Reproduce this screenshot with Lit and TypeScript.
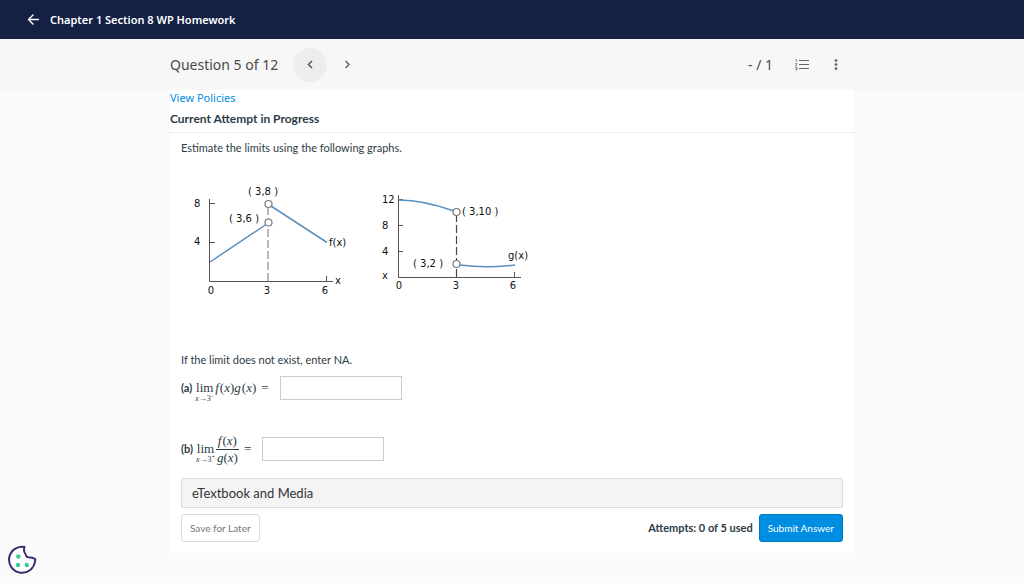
import { LitElement, html, css } from "lit";
import { customElement } from "lit/decorators.js";

@customElement("limit-graphs")
class LimitGraphs extends LitElement {
  static styles = css`
    :host { display: flex; }
    svg { display: block; width: 180px; height: 120px; font: 10px "DejaVu Sans", sans-serif; }
    .axis { stroke: #555; fill: none; }
    .dash { stroke: #888; stroke-width: 1.2; stroke-dasharray: 8 3; }
    .dash.dark { stroke: #444; }
    .curve { stroke: #5b8fbe; stroke-width: 1.5; fill: none; }
    .hole { stroke: #777; stroke-width: 1.2; fill: #fff; }
    text { fill: #111; }
    .mid { text-anchor: middle; }
  `;
  render() {
    return html`
      <svg viewBox="0 0 180 120" role="img" aria-label="Graph of f(x)">
        <path class="axis" d="M28.5 19V101.5H152M28.5 23.5H34M28.5 62.5H34M145.5 96V101" />
        <path class="dash" d="M87 101V24" />
        <path class="curve" d="M29 82L85 44.5M90 26L146 62.5" />
        <circle class="hole" cx="87.5" cy="24" r="3.5" />
        <circle class="hole" cx="87.5" cy="42.5" r="3.5" />
        <text x="13" y="27">8</text>
        <text x="13" y="65">4</text>
        <text class="mid" x="30" y="114">0</text>
        <text class="mid" x="86" y="114">3</text>
        <text class="mid" x="144" y="114">6</text>
        <text x="154" y="104">x</text>
        <text x="148" y="66">f(x)</text>
        <text x="67" y="15">( 3,8 )</text>
        <text x="48" y="42">( 3,6 )</text>
      </svg>
      <svg viewBox="0 0 180 120" role="img" aria-label="Graph of g(x)">
        <path class="axis" d="M37.5 15V97.5H160M37.5 19.5H42M37.5 45.5H42M37.5 71.5H42M153.5 92V97" />
        <path class="dash dark" d="M95.5 97V32" />
        <path class="curve" d="M38 20Q62 20 93 31M99 85Q125 88.5 154 85" />
        <circle class="hole" cx="95.5" cy="32" r="3.5" />
        <circle class="hole" cx="95.5" cy="84" r="3.5" />
        <text x="21" y="23">12</text>
        <text x="21" y="49">8</text>
        <text x="21" y="75">4</text>
        <text x="21" y="99">x</text>
        <text class="mid" x="38" y="109">0</text>
        <text class="mid" x="95" y="109">3</text>
        <text class="mid" x="152" y="109">6</text>
        <text x="101" y="35">( 3,10 )</text>
        <text x="52" y="87">( 3,2 )</text>
        <text x="147" y="79">g(x)</text>
      </svg>
    `;
  }
}

@customElement("app-root")
class AppRoot extends LitElement {
  static styles = css`
    :host {
      display: block; min-height: 100vh; background: #fafafa; color: #2d3b45;
      font: 11px/16px Lato, sans-serif;
    }
    * { box-sizing: border-box; }
    button { font: inherit; cursor: pointer; padding: 0; border: 0; background: none; color: inherit; }
    svg { display: block; }
    h1, h2, h3, p { margin: 0; font-size: inherit; }
    .top {
      display: flex; align-items: center; gap: 8px; height: 39px; padding: 0 26px;
      background: #142044; color: #fff; font-family: "Noto Sans", sans-serif;
    }
    .top h1 { font-weight: 600; }
    .bar { background: #f7f7f7; font-family: "Noto Sans", sans-serif; color: #4a4a4a; }
    .wrap { max-width: 684px; margin: 0 auto; }
    .bar .wrap { display: flex; align-items: center; height: 51px; padding-right: 1px; }
    .bar h2 { font-size: 14px; line-height: 20px; font-weight: 400; margin-right: 15px; }
    .round { display: grid; place-items: center; width: 34px; height: 34px; border-radius: 50%; }
    .round.on { background: #ededed; }
    .next { margin-left: 3px; }
    .score { margin-left: auto; margin-right: 12px; font-size: 14px; }
    .main { background: #fff; padding-bottom: 11px; }
    .link { display: block; width: max-content; font-family: "Noto Sans", sans-serif; color: #008ee2; text-decoration: none; }
    .status { font-size: 12px; font-weight: 700; padding: 5px 0; border-bottom: 1px solid #eee; }
    .body { padding: 7px 11px 0; }
    .graphs { margin: 24px 0 52px; }
    .row { display: flex; align-items: center; }
    .first { margin-top: 8px; height: 24px; }
    .second { margin-top: 37px; height: 24px; }
    .field { width: 122px; height: 24px; border: 1px solid #c7cdd1; background: #fff; font: inherit; padding: 0 6px; }
    .math { display: flex; align-items: center; font: 13px/16px "Liberation Serif", serif; margin: 0 11px 0 3px; }
    .lim { display: grid; justify-items: center; height: 16px; }
    .under { font-size: 8px; line-height: 6px; white-space: nowrap; }
    .under sup { font-size: 6px; line-height: 0; vertical-align: 3px; }
    .expr { margin-left: 1px; }
    .frac { display: grid; text-align: center; margin-left: 1px; }
    .frac i { display: block; padding: 0 1px; }
    .frac i:first-child { border-bottom: 1px solid #2d3b45; }
    .math i span { font-style: normal; }
    .math i .open { margin-left: 1px; }
    .eq { margin-left: 5px; }
    .media {
      display: block; width: 100%; height: 30px; margin: 17px 0 6px; padding: 0 10px; text-align: left;
      font-size: 13px; color: #333; background: #f4f4f4; border: 1px solid #ddd; border-radius: 2px;
    }
    .foot { display: flex; align-items: center; justify-content: space-between; }
    .right { display: flex; align-items: center; gap: 6px; }
    .btn { height: 28px; padding: 0 8px; border: 1px solid #ddd; border-radius: 3px; color: #777; font-size: 10px; }
    .btn.primary { background: #008ee2; border-color: #0079c1; color: #fff; }
    .cookie { position: fixed; left: 7px; bottom: 8px; }
  `;
  render() {
    return html`
      <header class="top">
        <button aria-label="Back">
          <svg width="16" height="16" viewBox="0 0 16 16" fill="none" stroke="#fff" stroke-width="1.4"><path d="M13 7.500H2.500M7.500 2.500L2.500 7.500L7.500 12.500" /></svg>
        </button>
        <h1>Chapter 1 Section 8 WP Homework</h1>
      </header>
      <nav class="bar">
        <div class="wrap">
          <h2>Question 5 of 12</h2>
          <button class="round on" aria-label="Previous question">
            <svg width="10" height="10" viewBox="0 0 10 10" fill="none" stroke="#555" stroke-width="1.5"><path d="M7 1L3.500 4.500L7 8" /></svg>
          </button>
          <button class="round next" aria-label="Next question">
            <svg width="10" height="10" viewBox="0 0 10 10" fill="none" stroke="#666" stroke-width="1.5"><path d="M3.5 1L7 4.500L3.5 8" /></svg>
          </button>
          <span class="score">- / 1</span>
          <button class="round" aria-label="Question list">
            <svg width="14" height="12" viewBox="0 0 14 12" fill="none" stroke="#666">
              <path d="M4 1.5H14M4 5.5H14M4 9.5H14" />
              <path stroke-width=".7" d="M.5 .5H1.4V3M.3 4.5H2L.4 6.8H2.1M.3 8.3H2V11H.3M.6 9.6H2" />
            </svg>
          </button>
          <button class="round" aria-label="More options">
            <svg width="4" height="12" viewBox="0 0 4 12" fill="#666"><circle cx="2" cy="1.6" r="1.4" /><circle cx="2" cy="5.600" r="1.4" /><circle cx="2" cy="9.600" r="1.4" /></svg>
          </button>
        </div>
      </nav>
      <main class="wrap main">
        <a class="link" href="#policies">View Policies</a>
        <h3 class="status">Current Attempt in Progress</h3>
        <div class="body">
          <p>Estimate the limits using the following graphs.</p>
          <limit-graphs class="graphs"></limit-graphs>
          <p>If the limit does not exist, enter NA.</p>
          <div class="row first">
            <label class="row" for="a"><b>(a)</b>
              <span class="math"><span class="lim"><span>lim</span><span class="under"><i>x</i>→3<sup>−</sup></span></span><i class="expr">f<span class="open">(</span>x<span>)</span>g<span class="open">(</span>x<span>)</span></i><span class="eq">=</span></span>
            </label>
            <input class="field" id="a" type="text" />
          </div>
          <div class="row second">
            <label class="row" for="b"><b>(b)</b>
              <span class="math"><span class="lim"><span>lim</span><span class="under"><i>x</i>→3<sup>+</sup></span></span><span class="frac"><i>f<span class="open">(</span>x<span>)</span></i><i>g<span>(</span>x<span>)</span></i></span><span class="eq">=</span></span>
            </label>
            <input class="field" id="b" type="text" />
          </div>
          <button class="media">eTextbook and Media</button>
          <div class="foot">
            <button class="btn">Save for Later</button>
            <div class="right"><b>Attempts: 0 of 5 used</b><button class="btn primary">Submit Answer</button></div>
          </div>
        </div>
      </main>
      <button class="cookie" aria-label="Cookie settings">
        <svg width="30" height="30" viewBox="0 0 30 30">
          <path d="M17.5 2A13 13 0 1 0 28 16Q29 14 27 13.500Q25.500 12.500 23 12.500Q19 12.500 18.700 9.500Q16 6 17.500 2Z" fill="#fff" stroke="#3b2c70" stroke-width="2" stroke-linejoin="round" />
          <g fill="#36cf98"><circle cx="11.300" cy="11.500" r="2.200" /><circle cx="11" cy="20" r="2.200" /><circle cx="19.800" cy="20" r="2.200" /></g>
        </svg>
      </button>
    `;
  }
}
